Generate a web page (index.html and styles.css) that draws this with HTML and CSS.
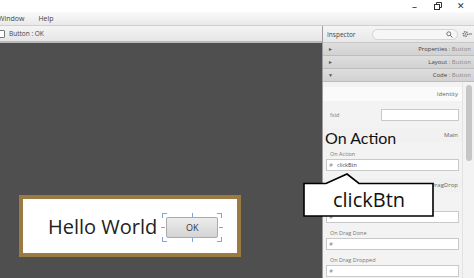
FILE: index.html
```html
<!DOCTYPE html>
<html lang="en">
<head>
    <meta charset="UTF-8">
    <title>Scene Builder</title>
    <link rel="stylesheet" href="styles.css">
</head>
<body>
    <div class="titlebar">
        <span class="win-btn win-btn--min">&#8211;</span>
        <span class="win-btn win-btn--max">
            <svg width="8" height="8" viewBox="0 0 8 8"><rect x="0.5" y="2.5" width="5" height="5" fill="none" stroke="#333"/><path d="M2.5 2.5V0.5h5v5h-2" fill="none" stroke="#333"/></svg>
        </span>
        <span class="win-btn win-btn--close">&#10005;</span>
    </div>
    <div class="menubar">
        <span class="menubar__item menubar__item--cut">Window</span>
        <span class="menubar__item">Help</span>
    </div>
    <div class="workspace">
        <div class="editor">
            <div class="crumbbar">
                <span class="crumbbar__icon"></span>
                <span>Button : OK</span>
            </div>
            <div class="canvas">
                <div class="stage">
                    <span class="stage__label">Hello World</span>
                    <span class="stage__selection">
                        <span class="stage__button">OK</span>
                        <i class="handle handle--tl"></i><i class="handle handle--tr"></i>
                        <i class="handle handle--bl"></i><i class="handle handle--br"></i>
                        <i class="tick tick--t"></i><i class="tick tick--b"></i>
                        <i class="tick tick--l"></i><i class="tick tick--r"></i>
                    </span>
                </div>
            </div>
        </div>
        <div class="inspector">
            <div class="inspector__head">
                <span class="inspector__title">Inspector</span>
                <span class="inspector__search">
                    <svg width="7" height="7" viewBox="0 0 7 7"><circle cx="2.8" cy="2.8" r="2" fill="none" stroke="#666" stroke-width="0.9"/><path d="M4.3 4.3L6.5 6.5" stroke="#666" stroke-width="1"/></svg>
                </span>
                <span class="inspector__gear">
                    <svg width="10" height="8" viewBox="0 0 10 8"><circle cx="3.5" cy="4" r="2.3" fill="none" stroke="#666" stroke-width="1.4" stroke-dasharray="1.2 0.9"/><circle cx="3.5" cy="4" r="0.8" fill="#666"/><path d="M7 4h3" stroke="#666" stroke-width="0.9"/></svg>
                </span>
            </div>
            <div class="accordion"><span class="accordion__arrow">&#9658;</span><span class="accordion__name">Properties <em>: Button</em></span></div>
            <div class="accordion"><span class="accordion__arrow">&#9658;</span><span class="accordion__name">Layout <em>: Button</em></span></div>
            <div class="accordion accordion--open"><span class="accordion__arrow">&#9660;</span><span class="accordion__name">Code <em>: Button</em></span></div>
            <div class="code">
                <div class="code__body">
                    <div class="group">Identity</div>
                    <div class="row">
                        <span class="field__label">fxid</span>
                        <span class="input input--short"></span>
                    </div>
                    <div class="group group--main">Main</div>
                    <div class="field field--first">
                        <div class="field__label">On Action</div>
                        <div class="input"><span class="input__hash">#</span>clickBtn</div>
                    </div>
                    <div class="group group--drag">DragDrop</div>
                    <!-- label of this one sits under the callout -->
                    <div class="field field--hidden">
                        <div class="field__label"></div>
                        <div class="input"><span class="input__hash">#</span></div>
                    </div>
                    <div class="field">
                        <div class="field__label">On Drag Done</div>
                        <div class="input"><span class="input__hash">#</span></div>
                    </div>
                    <div class="field">
                        <div class="field__label">On Drag Dropped</div>
                        <div class="input"><span class="input__hash">#</span></div>
                    </div>
                </div>
                <div class="scrollbar"><span class="scrollbar__thumb"></span></div>
            </div>
        </div>
    </div>

    <!-- annotations drawn on top of the screenshot -->
    <div class="note-title">On Action</div>
    <div class="callout">
        <svg class="callout__shape" width="132" height="45" viewBox="0 0 132 45">
            <path d="M1 10.5H23L44 1L56 10.5H130V43H1Z" fill="#fff" stroke="#000" stroke-width="1.6"/>
        </svg>
        <span class="callout__text">clickBtn</span>
    </div>
</body>
</html>
```

FILE: styles.css
```css
/* Base */
body, html {
    margin: 0;
    padding: 0;
    width: 474px;
    height: 278px;
    overflow: hidden;
    font-family: 'Open Sans', 'Liberation Sans', sans-serif;
    color: #333;
    background: #fff;
}

body {
    position: relative;
    display: flex;
    flex-direction: column;
}

/* Window chrome */
.titlebar {
    height: 12px;
    display: flex;
    justify-content: flex-end;
    align-items: center;
    background: #fff;
    padding-right: 2px;
}

.win-btn {
    width: 23px;
    text-align: center;
    font-size: 9px;
    line-height: 12px;
    color: #333;
}

.win-btn--min {
    font-size: 10px;
}

.win-btn svg {
    vertical-align: -1px;
}

.menubar {
    height: 13px;
    display: flex;
    align-items: center;
    gap: 14px;
    background: linear-gradient(#fafafa, #e9e9e9);
    border-bottom: 1px solid #cfcfcf;
    font-size: 7px;
    color: #444;
}

.menubar__item--cut {
    margin-left: -2px;
}

.workspace {
    flex: 1;
    display: flex;
    min-height: 0;
}

/* Editor side */
.editor {
    width: 322px;
    display: flex;
    flex-direction: column;
}

.crumbbar {
    height: 15px;
    display: flex;
    align-items: center;
    gap: 4px;
    font-size: 6.5px;
    color: #444;
    background: linear-gradient(#f4f4f4, #e6e6e6);
    border-bottom: 2px solid #b9b9b9;
}

.crumbbar__icon {
    width: 5px;
    height: 6px;
    margin-left: -2px;
    border: 1px solid #777;
    border-radius: 1px;
    background: #fff;
}

.canvas {
    flex: 1;
    background: #4f4f4f;
    padding: 152px 0 0 19px;
}

.stage {
    width: 189px;
    height: 54px;
    border: 4px solid #9b7b41;
    background: #fff;
    display: flex;
    align-items: center;
    padding-left: 25px;
}

.stage__label {
    font-family: 'Open Sans', sans-serif;
    font-size: 20px;
    color: #222;
}

.stage__selection {
    position: relative;
    margin-left: 9px;
    margin-top: 2px;
}

.stage__button {
    display: block;
    width: 50px;
    height: 19px;
    line-height: 19px;
    text-align: center;
    font-size: 9px;
    color: #333;
    background: linear-gradient(#ececec, #d4d4d4);
    border: 1px solid #aaa;
    border-radius: 2px;
}

.handle {
    position: absolute;
    width: 4px;
    height: 4px;
    border: 0 solid #7fa6d6;
}

.handle--tl { left: -4px; top: -4px; border-left-width: 1px; border-top-width: 1px; }
.handle--tr { right: -4px; top: -4px; border-right-width: 1px; border-top-width: 1px; }
.handle--bl { left: -4px; bottom: -4px; border-left-width: 1px; border-bottom-width: 1px; }
.handle--br { right: -4px; bottom: -4px; border-right-width: 1px; border-bottom-width: 1px; }

.tick {
    position: absolute;
    background: #7fa6d6;
}

.tick--t { left: 50%; top: -4px; width: 1px; height: 4px; }
.tick--b { left: 50%; bottom: -4px; width: 1px; height: 4px; }
.tick--l { top: 50%; left: -5px; width: 4px; height: 1px; }
.tick--r { top: 50%; right: -5px; width: 4px; height: 1px; }

/* Inspector */
.inspector {
    flex: 1;
    display: flex;
    flex-direction: column;
    border-left: 1px solid #9d9d9d;
    background: #efefef;
    min-width: 0;
}

.inspector__head {
    height: 16px;
    display: flex;
    align-items: center;
    padding-left: 4px;
    background: linear-gradient(#f5f5f5, #e8e8e8);
    border-bottom: 1px solid #c8c8c8;
    font-size: 6.5px;
    color: #444;
}

.inspector__search {
    margin-left: 16px;
    width: 80px;
    height: 9px;
    border: 1px solid #d4d4d4;
    border-radius: 6px;
    background: #f6f6f6;
    display: flex;
    justify-content: flex-end;
    align-items: center;
    padding-right: 4px;
}

.inspector__gear {
    margin-left: 4px;
    display: flex;
}

.accordion {
    height: 12px;
    display: flex;
    align-items: center;
    padding: 0 3px 0 5px;
    color: #555;
    background: linear-gradient(#dedede, #d2d2d2);
    border-bottom: 1px solid #bdbdbd;
}

.accordion__arrow {
    font-size: 5px;
}

.accordion__name {
    margin-left: auto;
    font-size: 6px;
    color: #444;
}

.accordion__name em {
    font-style: normal;
    color: #8a8a8a;
}

.code {
    flex: 1;
    display: flex;
    min-height: 0;
    background: #f3f3f3;
}

.code__body {
    flex: 1;
    padding: 5px 3px 0 3px;
    min-width: 0;
}

.group {
    height: 14px;
    line-height: 14px;
    text-align: right;
    font-size: 6px;
    color: #666;
    background: #fafafa;
    margin: 0 -3px;
    padding-right: 4px;
}

.group--main,
.group--drag {
    margin-top: 7px;
    background: #f1f1f1;
}

.row {
    display: flex;
    align-items: center;
    justify-content: space-between;
    margin-top: 8px;
}

.field {
    margin-top: 5px;
}

.field--first {
    margin-top: 7px;
}

.field--hidden {
    margin-top: 9px;
}

.field__label {
    height: 10px;
    line-height: 10px;
    padding-left: 4px;
    font-size: 5.5px;
    color: #777;
}

.input {
    height: 12px;
    box-sizing: border-box;
    border: 1px solid #c9c9c9;
    background: #fff;
    display: flex;
    align-items: center;
    font-size: 5.5px;
    color: #444;
}

.input--short {
    width: 78px;
}

.input__hash {
    width: 8px;
    text-align: center;
    color: #888;
    margin-right: 2px;
}

.scrollbar {
    width: 11px;
    display: flex;
    justify-content: center;
    padding-top: 3px;
    border-left: 1px solid #e2e2e2;
}

.scrollbar__thumb {
    width: 6px;
    height: 76px;
    border-radius: 3px;
    background: #c6c6c6;
}

/* Annotations */
.note-title {
    position: absolute;
    left: 325px;
    top: 128px;
    font-family: Lato, 'Open Sans', sans-serif;
    font-size: 16px;
    line-height: 20px;
    color: #111;
}

.callout {
    position: absolute;
    left: 303px;
    top: 173px;
    width: 132px;
    height: 45px;
}

.callout__shape {
    position: absolute;
    left: 0;
    top: 0;
}

.callout__text {
    position: absolute;
    left: 0;
    right: 0;
    top: 14px;
    text-align: center;
    font-family: 'Open Sans', sans-serif;
    font-size: 20px;
    line-height: 26px;
    color: #111;
}
```
